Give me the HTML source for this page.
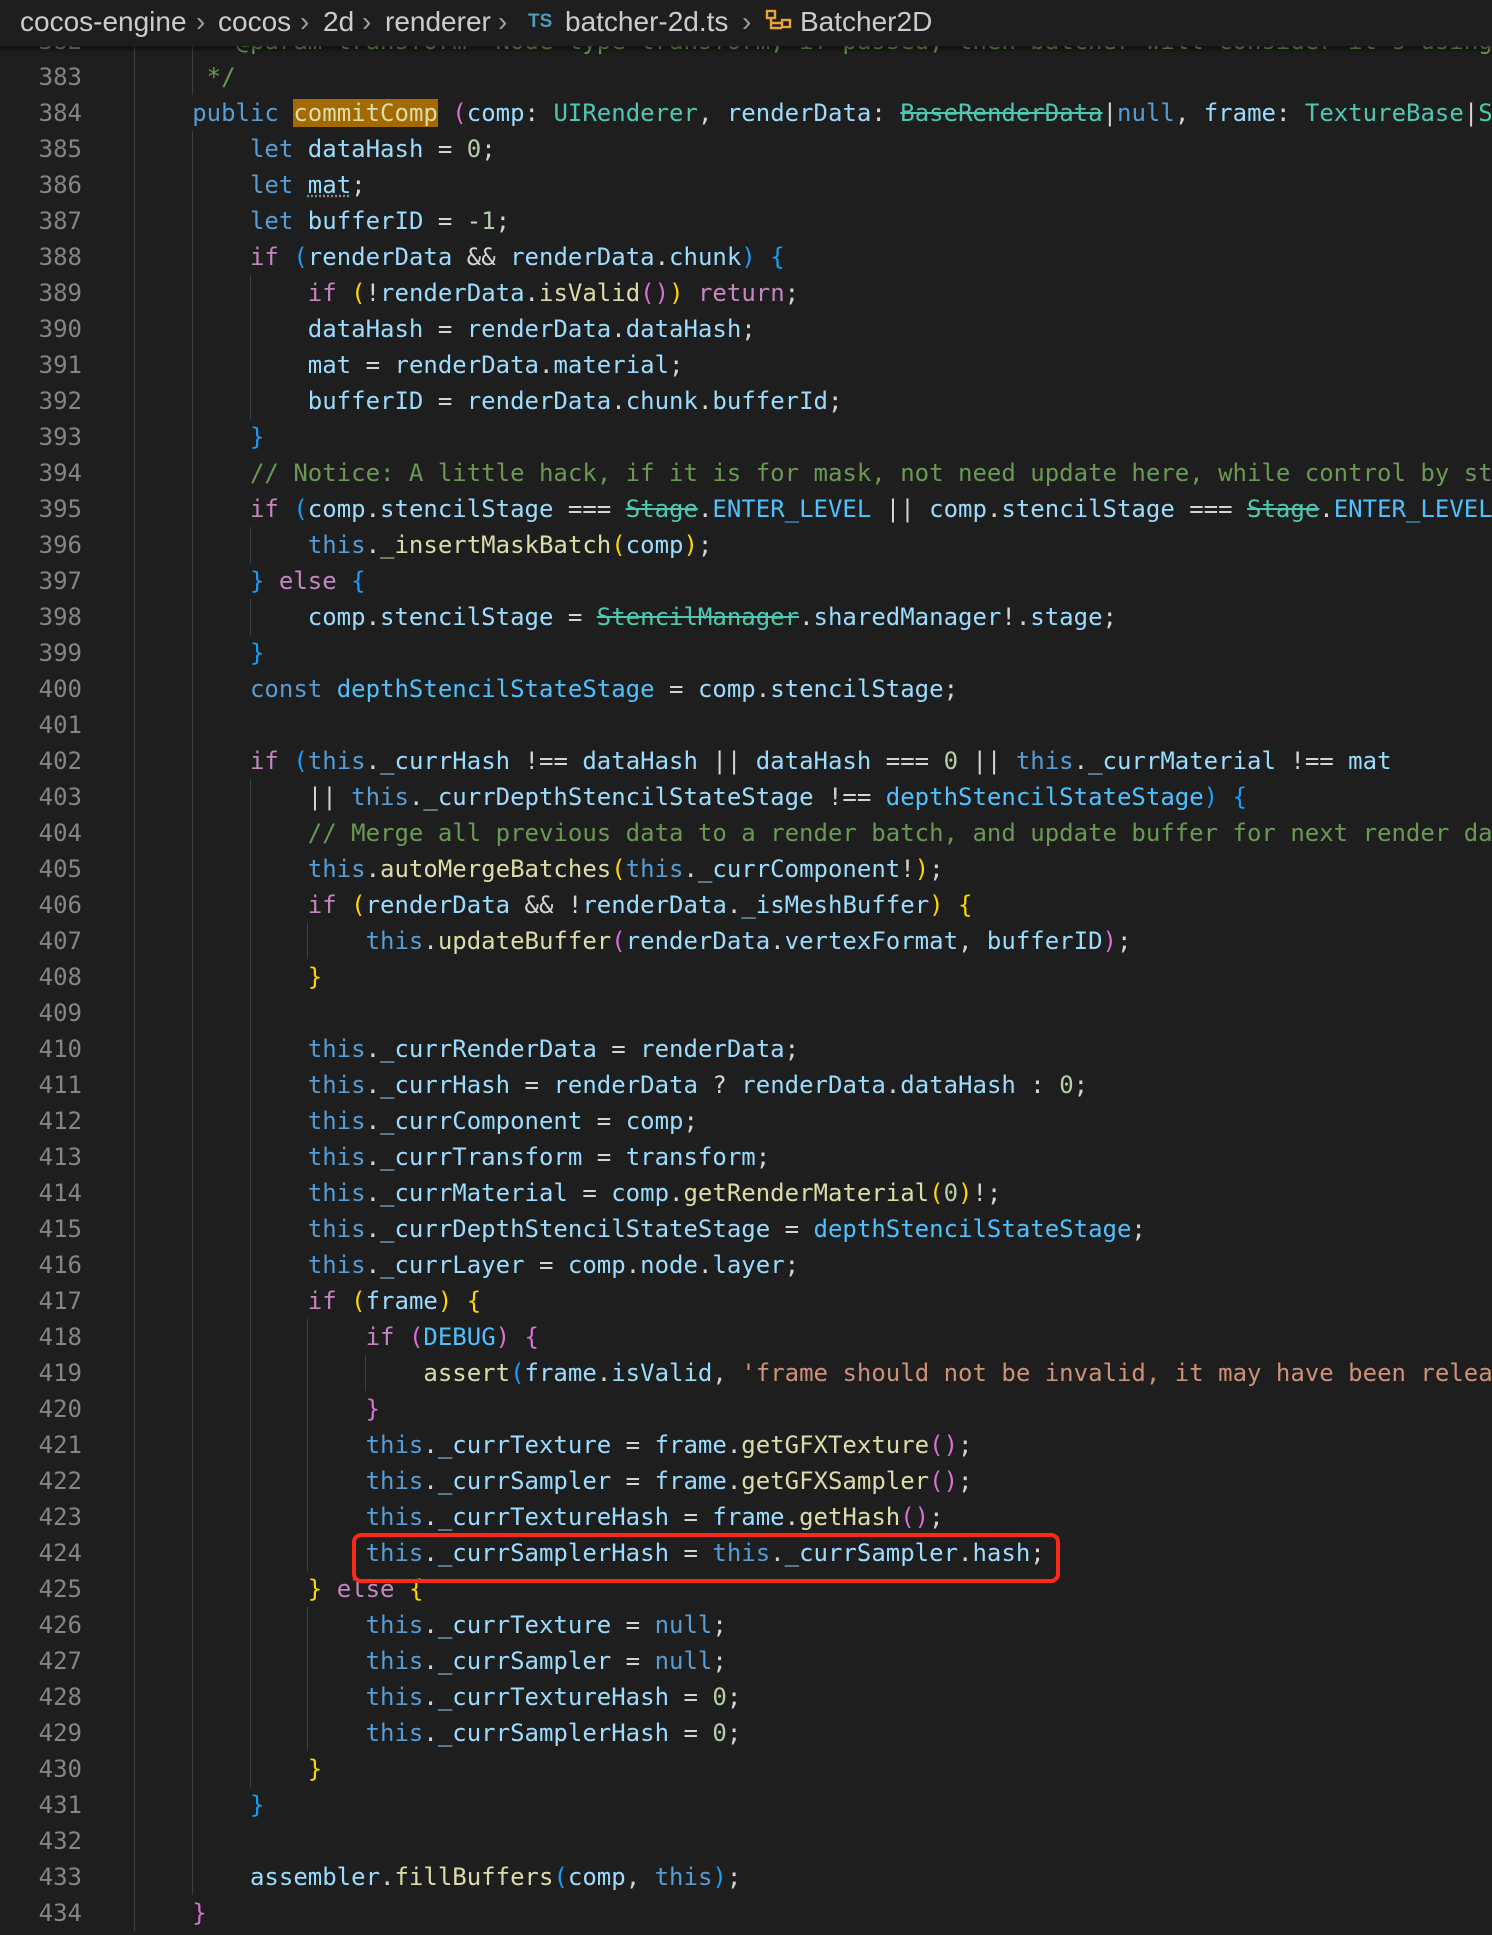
<!DOCTYPE html>
<html><head><meta charset="utf-8"><style>
html,body{margin:0;padding:0;background:#1e1e1e;}
body{width:1492px;height:1935px;overflow:hidden;position:relative;font-family:"DejaVu Sans Mono","Liberation Mono",monospace;}
#hdr{position:absolute;left:0;top:0;width:1492px;height:46px;background:#1e1e1e;box-shadow:0 3px 5px rgba(0,0,0,.55);z-index:5;font-family:"Liberation Sans",sans-serif;font-size:28px;color:#cccccc;overflow:hidden;}
#hdr span{position:absolute;top:6px;white-space:nowrap;}
#hdr .sep{color:#a0a0a0;}
#code{position:absolute;left:0;top:23px;width:1492px;height:1912px;overflow:hidden;}
.l{position:relative;height:36px;line-height:36px;font-size:24px;white-space:pre;color:#d4d4d4;}
.ln{position:absolute;left:0;width:82px;text-align:right;color:#858585;}
.tx{position:absolute;left:134.4px;top:0;}
.gd{position:absolute;top:0;width:1px;height:36px;background:#404040;}
.k{color:#569cd6}.c{color:#c586c0}.v{color:#9cdcfe}.f{color:#dcdcaa}.t{color:#4ec9b0}.n{color:#b5cea8}.s{color:#ce9178}.cm{color:#6a9955}.o{color:#4fc1ff}
.b1{color:#ffd700}.b2{color:#da70d6}.b3{color:#179fff}
.st{color:#4ec9b0;text-decoration:line-through}
.hl{background:#a26a00;color:#dcdcaa}
#box{position:absolute;left:352px;top:1533px;width:700px;height:42px;border:4px solid #fa2a16;border-radius:9px;}
</style></head><body>
<div id="hdr">
<span style="left:20px">cocos-engine</span><span class="sep" style="left:196px">›</span>
<span style="left:218px">cocos</span><span class="sep" style="left:300px">›</span>
<span style="left:323px">2d</span><span class="sep" style="left:362px">›</span>
<span style="left:385px">renderer</span><span class="sep" style="left:498px">›</span>
<span style="left:528px;top:11px;font-size:19px;font-weight:bold;color:#519aba">TS</span>
<span style="left:565px">batcher-2d.ts</span><span class="sep" style="left:742px">›</span>
<span style="left:765px;top:8px"><svg width="28" height="28" viewBox="0 0 28 28" fill="none" stroke="#e8a23a" stroke-width="2.4"><rect x="2" y="3" width="8" height="7"/><rect x="17" y="12" width="8" height="7"/><path d="M6 10v10h11M6 15h11"/></svg></span>
<span style="left:800px">Batcher2D</span>
</div>
<div id="code">
<div class="l"><span class="ln">382</span><span class="gd" style="left:134px"></span><span class="gd" style="left:192px"></span><span class="tx cm">     * @param transform  Node type transform, if passed, then batcher will consider it's using</span></div>
<div class="l"><span class="ln">383</span><span class="gd" style="left:134px"></span><span class="gd" style="left:192px"></span><span class="tx cm">     */</span></div>
<div class="l"><span class="ln">384</span><span class="gd" style="left:134px"></span><span class="tx">    <span class="k">public</span> <span class="hl">commitComp</span> <span class="b2">(</span><span class="v">comp</span>: <span class="t">UIRenderer</span>, <span class="v">renderData</span>: <span class="st">BaseRenderData</span>|<span class="k">null</span>, <span class="v">frame</span>: <span class="t">TextureBase</span>|<span class="t">SpriteFrame</span></span></div>
<div class="l"><span class="ln">385</span><span class="gd" style="left:134px"></span><span class="gd" style="left:192px"></span><span class="tx">        <span class="k">let</span> <span class="v">dataHash</span> = <span class="n">0</span>;</span></div>
<div class="l"><span class="ln">386</span><span class="gd" style="left:134px"></span><span class="gd" style="left:192px"></span><span class="tx">        <span class="k">let</span> <span class="v" style="text-decoration:underline dotted #888">mat</span>;</span></div>
<div class="l"><span class="ln">387</span><span class="gd" style="left:134px"></span><span class="gd" style="left:192px"></span><span class="tx">        <span class="k">let</span> <span class="v">bufferID</span> = -<span class="n">1</span>;</span></div>
<div class="l"><span class="ln">388</span><span class="gd" style="left:134px"></span><span class="gd" style="left:192px"></span><span class="tx">        <span class="c">if</span> <span class="b3">(</span><span class="v">renderData</span> &amp;&amp; <span class="v">renderData</span>.<span class="v">chunk</span><span class="b3">)</span> <span class="b3">{</span></span></div>
<div class="l"><span class="ln">389</span><span class="gd" style="left:134px"></span><span class="gd" style="left:192px"></span><span class="gd" style="left:250px"></span><span class="tx">            <span class="c">if</span> <span class="b1">(</span>!<span class="v">renderData</span>.<span class="f">isValid</span><span class="b2">()</span><span class="b1">)</span> <span class="c">return</span>;</span></div>
<div class="l"><span class="ln">390</span><span class="gd" style="left:134px"></span><span class="gd" style="left:192px"></span><span class="gd" style="left:250px"></span><span class="tx">            <span class="v">dataHash</span> = <span class="v">renderData</span>.<span class="v">dataHash</span>;</span></div>
<div class="l"><span class="ln">391</span><span class="gd" style="left:134px"></span><span class="gd" style="left:192px"></span><span class="gd" style="left:250px"></span><span class="tx">            <span class="v">mat</span> = <span class="v">renderData</span>.<span class="v">material</span>;</span></div>
<div class="l"><span class="ln">392</span><span class="gd" style="left:134px"></span><span class="gd" style="left:192px"></span><span class="gd" style="left:250px"></span><span class="tx">            <span class="v">bufferID</span> = <span class="v">renderData</span>.<span class="v">chunk</span>.<span class="v">bufferId</span>;</span></div>
<div class="l"><span class="ln">393</span><span class="gd" style="left:134px"></span><span class="gd" style="left:192px"></span><span class="tx">        <span class="b3">}</span></span></div>
<div class="l"><span class="ln">394</span><span class="gd" style="left:134px"></span><span class="gd" style="left:192px"></span><span class="tx cm">        // Notice: A little hack, if it is for mask, not need update here, while control by stencil</span></div>
<div class="l"><span class="ln">395</span><span class="gd" style="left:134px"></span><span class="gd" style="left:192px"></span><span class="tx">        <span class="c">if</span> <span class="b3">(</span><span class="v">comp</span>.<span class="v">stencilStage</span> === <span class="st">Stage</span>.<span class="o">ENTER_LEVEL</span> || <span class="v">comp</span>.<span class="v">stencilStage</span> === <span class="st">Stage</span>.<span class="o">ENTER_LEVEL_INVERTED</span></span></div>
<div class="l"><span class="ln">396</span><span class="gd" style="left:134px"></span><span class="gd" style="left:192px"></span><span class="gd" style="left:250px"></span><span class="tx">            <span class="k">this</span>.<span class="f">_insertMaskBatch</span><span class="b1">(</span><span class="v">comp</span><span class="b1">)</span>;</span></div>
<div class="l"><span class="ln">397</span><span class="gd" style="left:134px"></span><span class="gd" style="left:192px"></span><span class="tx">        <span class="b3">}</span> <span class="c">else</span> <span class="b3">{</span></span></div>
<div class="l"><span class="ln">398</span><span class="gd" style="left:134px"></span><span class="gd" style="left:192px"></span><span class="gd" style="left:250px"></span><span class="tx">            <span class="v">comp</span>.<span class="v">stencilStage</span> = <span class="st">StencilManager</span>.<span class="v">sharedManager</span>!.<span class="v">stage</span>;</span></div>
<div class="l"><span class="ln">399</span><span class="gd" style="left:134px"></span><span class="gd" style="left:192px"></span><span class="tx">        <span class="b3">}</span></span></div>
<div class="l"><span class="ln">400</span><span class="gd" style="left:134px"></span><span class="gd" style="left:192px"></span><span class="tx">        <span class="k">const</span> <span class="o">depthStencilStateStage</span> = <span class="v">comp</span>.<span class="v">stencilStage</span>;</span></div>
<div class="l"><span class="ln">401</span><span class="gd" style="left:134px"></span><span class="gd" style="left:192px"></span><span class="tx"></span></div>
<div class="l"><span class="ln">402</span><span class="gd" style="left:134px"></span><span class="gd" style="left:192px"></span><span class="tx">        <span class="c">if</span> <span class="b3">(</span><span class="k">this</span>.<span class="v">_currHash</span> !== <span class="v">dataHash</span> || <span class="v">dataHash</span> === <span class="n">0</span> || <span class="k">this</span>.<span class="v">_currMaterial</span> !== <span class="v">mat</span></span></div>
<div class="l"><span class="ln">403</span><span class="gd" style="left:134px"></span><span class="gd" style="left:192px"></span><span class="gd" style="left:250px"></span><span class="tx">            || <span class="k">this</span>.<span class="v">_currDepthStencilStateStage</span> !== <span class="o">depthStencilStateStage</span><span class="b3">)</span> <span class="b3">{</span></span></div>
<div class="l"><span class="ln">404</span><span class="gd" style="left:134px"></span><span class="gd" style="left:192px"></span><span class="gd" style="left:250px"></span><span class="tx cm">            // Merge all previous data to a render batch, and update buffer for next render data</span></div>
<div class="l"><span class="ln">405</span><span class="gd" style="left:134px"></span><span class="gd" style="left:192px"></span><span class="gd" style="left:250px"></span><span class="tx">            <span class="k">this</span>.<span class="f">autoMergeBatches</span><span class="b1">(</span><span class="k">this</span>.<span class="v">_currComponent</span>!<span class="b1">)</span>;</span></div>
<div class="l"><span class="ln">406</span><span class="gd" style="left:134px"></span><span class="gd" style="left:192px"></span><span class="gd" style="left:250px"></span><span class="tx">            <span class="c">if</span> <span class="b1">(</span><span class="v">renderData</span> &amp;&amp; !<span class="v">renderData</span>.<span class="v">_isMeshBuffer</span><span class="b1">)</span> <span class="b1">{</span></span></div>
<div class="l"><span class="ln">407</span><span class="gd" style="left:134px"></span><span class="gd" style="left:192px"></span><span class="gd" style="left:250px"></span><span class="gd" style="left:307px"></span><span class="tx">                <span class="k">this</span>.<span class="f">updateBuffer</span><span class="b2">(</span><span class="v">renderData</span>.<span class="v">vertexFormat</span>, <span class="v">bufferID</span><span class="b2">)</span>;</span></div>
<div class="l"><span class="ln">408</span><span class="gd" style="left:134px"></span><span class="gd" style="left:192px"></span><span class="gd" style="left:250px"></span><span class="tx">            <span class="b1">}</span></span></div>
<div class="l"><span class="ln">409</span><span class="gd" style="left:134px"></span><span class="gd" style="left:192px"></span><span class="gd" style="left:250px"></span><span class="tx"></span></div>
<div class="l"><span class="ln">410</span><span class="gd" style="left:134px"></span><span class="gd" style="left:192px"></span><span class="gd" style="left:250px"></span><span class="tx">            <span class="k">this</span>.<span class="v">_currRenderData</span> = <span class="v">renderData</span>;</span></div>
<div class="l"><span class="ln">411</span><span class="gd" style="left:134px"></span><span class="gd" style="left:192px"></span><span class="gd" style="left:250px"></span><span class="tx">            <span class="k">this</span>.<span class="v">_currHash</span> = <span class="v">renderData</span> ? <span class="v">renderData</span>.<span class="v">dataHash</span> : <span class="n">0</span>;</span></div>
<div class="l"><span class="ln">412</span><span class="gd" style="left:134px"></span><span class="gd" style="left:192px"></span><span class="gd" style="left:250px"></span><span class="tx">            <span class="k">this</span>.<span class="v">_currComponent</span> = <span class="v">comp</span>;</span></div>
<div class="l"><span class="ln">413</span><span class="gd" style="left:134px"></span><span class="gd" style="left:192px"></span><span class="gd" style="left:250px"></span><span class="tx">            <span class="k">this</span>.<span class="v">_currTransform</span> = <span class="v">transform</span>;</span></div>
<div class="l"><span class="ln">414</span><span class="gd" style="left:134px"></span><span class="gd" style="left:192px"></span><span class="gd" style="left:250px"></span><span class="tx">            <span class="k">this</span>.<span class="v">_currMaterial</span> = <span class="v">comp</span>.<span class="f">getRenderMaterial</span><span class="b1">(</span><span class="n">0</span><span class="b1">)</span>!;</span></div>
<div class="l"><span class="ln">415</span><span class="gd" style="left:134px"></span><span class="gd" style="left:192px"></span><span class="gd" style="left:250px"></span><span class="tx">            <span class="k">this</span>.<span class="v">_currDepthStencilStateStage</span> = <span class="o">depthStencilStateStage</span>;</span></div>
<div class="l"><span class="ln">416</span><span class="gd" style="left:134px"></span><span class="gd" style="left:192px"></span><span class="gd" style="left:250px"></span><span class="tx">            <span class="k">this</span>.<span class="v">_currLayer</span> = <span class="v">comp</span>.<span class="v">node</span>.<span class="v">layer</span>;</span></div>
<div class="l"><span class="ln">417</span><span class="gd" style="left:134px"></span><span class="gd" style="left:192px"></span><span class="gd" style="left:250px"></span><span class="tx">            <span class="c">if</span> <span class="b1">(</span><span class="v">frame</span><span class="b1">)</span> <span class="b1">{</span></span></div>
<div class="l"><span class="ln">418</span><span class="gd" style="left:134px"></span><span class="gd" style="left:192px"></span><span class="gd" style="left:250px"></span><span class="gd" style="left:307px"></span><span class="tx">                <span class="c">if</span> <span class="b2">(</span><span class="o">DEBUG</span><span class="b2">)</span> <span class="b2">{</span></span></div>
<div class="l"><span class="ln">419</span><span class="gd" style="left:134px"></span><span class="gd" style="left:192px"></span><span class="gd" style="left:250px"></span><span class="gd" style="left:307px"></span><span class="gd" style="left:365px"></span><span class="tx">                    <span class="f">assert</span><span class="b3">(</span><span class="v">frame</span>.<span class="v">isValid</span>, <span class="s">'frame should not be invalid, it may have been released'</span></span></div>
<div class="l"><span class="ln">420</span><span class="gd" style="left:134px"></span><span class="gd" style="left:192px"></span><span class="gd" style="left:250px"></span><span class="gd" style="left:307px"></span><span class="tx">                <span class="b2">}</span></span></div>
<div class="l"><span class="ln">421</span><span class="gd" style="left:134px"></span><span class="gd" style="left:192px"></span><span class="gd" style="left:250px"></span><span class="gd" style="left:307px"></span><span class="tx">                <span class="k">this</span>.<span class="v">_currTexture</span> = <span class="v">frame</span>.<span class="f">getGFXTexture</span><span class="b2">()</span>;</span></div>
<div class="l"><span class="ln">422</span><span class="gd" style="left:134px"></span><span class="gd" style="left:192px"></span><span class="gd" style="left:250px"></span><span class="gd" style="left:307px"></span><span class="tx">                <span class="k">this</span>.<span class="v">_currSampler</span> = <span class="v">frame</span>.<span class="f">getGFXSampler</span><span class="b2">()</span>;</span></div>
<div class="l"><span class="ln">423</span><span class="gd" style="left:134px"></span><span class="gd" style="left:192px"></span><span class="gd" style="left:250px"></span><span class="gd" style="left:307px"></span><span class="tx">                <span class="k">this</span>.<span class="v">_currTextureHash</span> = <span class="v">frame</span>.<span class="f">getHash</span><span class="b2">()</span>;</span></div>
<div class="l"><span class="ln">424</span><span class="gd" style="left:134px"></span><span class="gd" style="left:192px"></span><span class="gd" style="left:250px"></span><span class="gd" style="left:307px"></span><span class="tx">                <span class="k">this</span>.<span class="v">_currSamplerHash</span> = <span class="k">this</span>.<span class="v">_currSampler</span>.<span class="v">hash</span>;</span></div>
<div class="l"><span class="ln">425</span><span class="gd" style="left:134px"></span><span class="gd" style="left:192px"></span><span class="gd" style="left:250px"></span><span class="tx">            <span class="b1">}</span> <span class="c">else</span> <span class="b1">{</span></span></div>
<div class="l"><span class="ln">426</span><span class="gd" style="left:134px"></span><span class="gd" style="left:192px"></span><span class="gd" style="left:250px"></span><span class="gd" style="left:307px"></span><span class="tx">                <span class="k">this</span>.<span class="v">_currTexture</span> = <span class="k">null</span>;</span></div>
<div class="l"><span class="ln">427</span><span class="gd" style="left:134px"></span><span class="gd" style="left:192px"></span><span class="gd" style="left:250px"></span><span class="gd" style="left:307px"></span><span class="tx">                <span class="k">this</span>.<span class="v">_currSampler</span> = <span class="k">null</span>;</span></div>
<div class="l"><span class="ln">428</span><span class="gd" style="left:134px"></span><span class="gd" style="left:192px"></span><span class="gd" style="left:250px"></span><span class="gd" style="left:307px"></span><span class="tx">                <span class="k">this</span>.<span class="v">_currTextureHash</span> = <span class="n">0</span>;</span></div>
<div class="l"><span class="ln">429</span><span class="gd" style="left:134px"></span><span class="gd" style="left:192px"></span><span class="gd" style="left:250px"></span><span class="gd" style="left:307px"></span><span class="tx">                <span class="k">this</span>.<span class="v">_currSamplerHash</span> = <span class="n">0</span>;</span></div>
<div class="l"><span class="ln">430</span><span class="gd" style="left:134px"></span><span class="gd" style="left:192px"></span><span class="gd" style="left:250px"></span><span class="tx">            <span class="b1">}</span></span></div>
<div class="l"><span class="ln">431</span><span class="gd" style="left:134px"></span><span class="gd" style="left:192px"></span><span class="tx">        <span class="b3">}</span></span></div>
<div class="l"><span class="ln">432</span><span class="gd" style="left:134px"></span><span class="gd" style="left:192px"></span><span class="tx"></span></div>
<div class="l"><span class="ln">433</span><span class="gd" style="left:134px"></span><span class="gd" style="left:192px"></span><span class="tx">        <span class="v">assembler</span>.<span class="f">fillBuffers</span><span class="b3">(</span><span class="v">comp</span>, <span class="k">this</span><span class="b3">)</span>;</span></div>
<div class="l"><span class="ln">434</span><span class="gd" style="left:134px"></span><span class="tx">    <span class="b2">}</span></span></div>
</div>
<div id="box"></div>
</body></html>
